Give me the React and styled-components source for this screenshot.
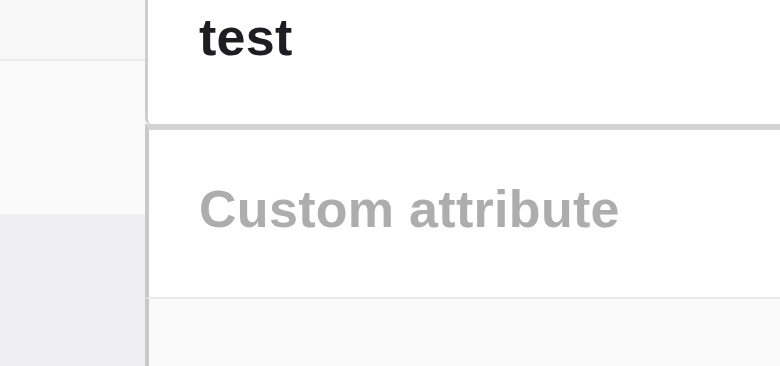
import React from "react";
import styled, { createGlobalStyle } from "styled-components";

const Global = createGlobalStyle`
  html, body { margin: 0; padding: 0; background: #ffffff; }
  body { font-family: "Liberation Sans", Arial, sans-serif; }
  * { box-sizing: border-box; }
`;

const Layout = styled.div`
  display: grid;
  grid-template-columns: 145px 1fr;
  width: 780px;
  height: 366px;
  overflow: hidden;
`;

const Sidebar = styled.div`
  display: flex;
  flex-direction: column;
`;

const SideCell = styled.div`
  height: ${(p) => (p.$h ? `${p.$h}px` : "auto")};
  flex: ${(p) => (p.$grow ? 1 : "none")};
  background: ${(p) => p.$bg};
  border-bottom: ${(p) => (p.$divider ? "2px solid #ebebeb" : "none")};
`;

const Main = styled.div`
  display: flex;
  flex-direction: column;
  background: #efeef0;
`;

const Field = styled.div`
  height: 124px;
  padding: 11px 0 0 51px;
  background: #ffffff;
  border-left: 3px solid #cdcdcd;
  border-bottom-left-radius: 6px;
`;

const Value = styled.div`
  font-size: 52px;
  line-height: 52px;
  font-weight: 700;
  letter-spacing: 0.3px;
  color: ${(p) => (p.$placeholder ? "#adadad" : "#1d1d22")};
`;

const InputRow = styled.div`
  height: 175px;
  padding: 53px 0 0 50px;
  background: #ffffff;
  border-top: 6px solid #d3d3d3;
  border-left: 4px solid #c9c9c9;
  border-bottom: 2px solid #ebebeb;
`;

const EmptyRow = styled.div`
  flex: 1;
  background: #fafafa;
  border-left: 4px solid #c9c9c9;
`;

export default function App() {
  return (
    <>
      <Global />
      <Layout>
        <Sidebar>
          <SideCell $h={61} $bg="#f8f8f8" $divider />
          <SideCell $h={153} $bg="#fafafa" />
          <SideCell $grow $bg="#efeef0" />
        </Sidebar>
        <Main>
          <Field>
            <Value>test</Value>
          </Field>
          <InputRow>
            <Value $placeholder>Custom attribute</Value>
          </InputRow>
          <EmptyRow />
        </Main>
      </Layout>
    </>
  );
}
